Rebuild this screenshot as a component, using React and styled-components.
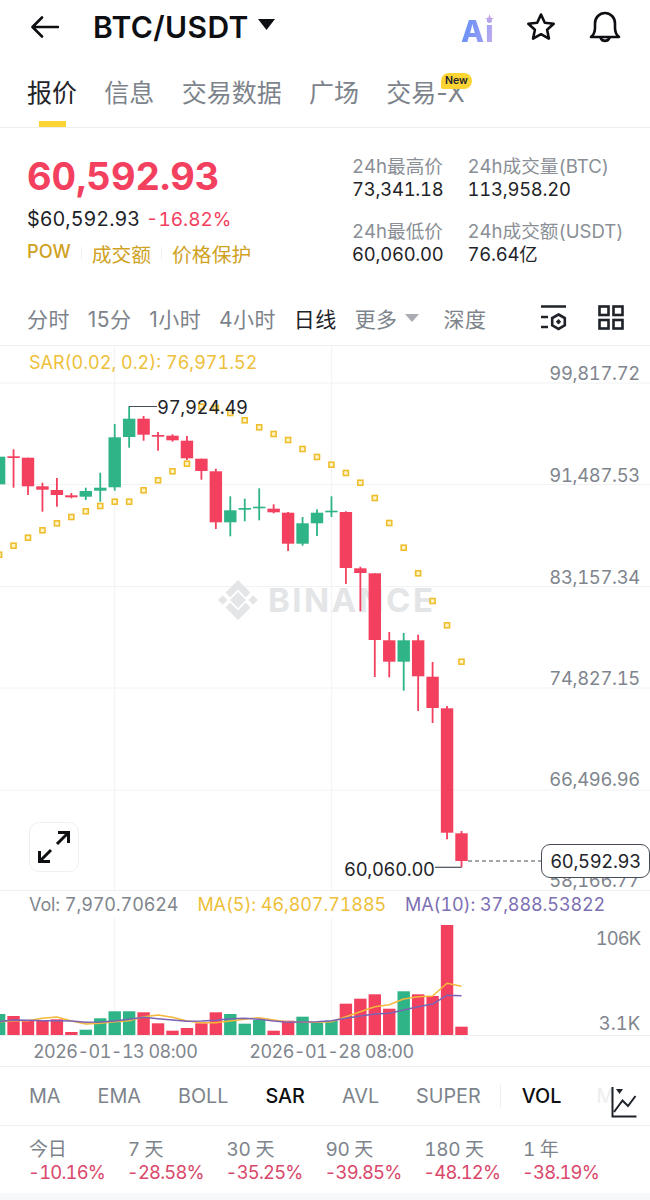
import React from "react";
import styled, { createGlobalStyle } from "styled-components";

const RED = "#f4405f";
const GREEN = "#2eb486";
const GRID = "#f1f2f4";

// chart data is in page pixels, the svg viewBoxes below use page coordinates
const candleX = (i) => 114.7 + 14.45 * i;

// [index, up, bodyTop, bodyBottom, wickTop, wickBottom]
const candles = [
  [-8, 1, 456.7, 484.3, 445, 484.3],
  [-7, 0, 456.3, 458, 449.3, 487.7],
  [-6, 0, 457.7, 486.3, 457.7, 495],
  [-5, 0, 486.3, 489.7, 482.7, 511.7],
  [-4, 0, 490, 495, 478, 506.7],
  [-3, 0, 495.3, 497.3, 493, 498.3],
  [-2, 1, 491, 496.7, 487.7, 500],
  [-1, 1, 487.7, 490.7, 472.7, 501.7],
  [0, 1, 437.3, 487.3, 424, 490.7],
  [1, 1, 418.7, 437, 406.7, 447.7],
  [2, 0, 418.7, 434.7, 416, 440.7],
  [3, 0, 435, 436.7, 432, 450.7],
  [4, 0, 435.7, 440.3, 434.3, 441.7],
  [5, 0, 440.7, 458.3, 436, 460],
  [6, 0, 458.7, 471, 458.7, 479.7],
  [7, 0, 471.3, 522.3, 468.7, 529],
  [8, 1, 510.3, 522.3, 496.3, 536.3],
  [9, 1, 508, 509.7, 498.7, 521.3],
  [10, 1, 506.7, 508.3, 488.3, 520.3],
  [11, 0, 508.7, 512.3, 504.3, 513.3],
  [12, 0, 512.7, 543.7, 512, 551],
  [13, 1, 523.3, 543.7, 517, 545.7],
  [14, 1, 512.7, 523.3, 509.3, 536],
  [15, 1, 510.7, 512.3, 496.3, 517],
  [16, 0, 512, 568, 511.3, 584],
  [17, 0, 568.3, 573, 566.7, 611.3],
  [18, 0, 573.3, 640, 573.3, 677],
  [19, 0, 640.3, 661.7, 632, 677.3],
  [20, 1, 640.3, 661.7, 633, 690.7],
  [21, 0, 640.3, 676.3, 634.7, 711],
  [22, 0, 676.7, 708, 662, 723],
  [23, 0, 708.3, 832.7, 706, 839.3],
  [24, 0, 833.3, 861, 831, 867.3],
];

const sarDots = [
  554.7, 545.7, 537.7, 530.3, 523.3, 517, 511.3, 506, 501.7, 501.7, 490.3, 480.3, 471.3, 463.7,
  406.7, 408, 413, 420.3, 427.3, 434, 440, 449, 457, 464.7, 473, 482.7, 498, 523, 547.7, 573.3,
  601, 625.3, 661.7,
];

const volumes = [
  1014, 1016, 1020, 1020, 1019.3, 1032, 1029.7, 1018.3, 1011.3, 1011.3, 1012.3, 1023.3, 1030.7,
  1028, 1023.3, 1012.3, 1014, 1023.7, 1020, 1030.7, 1020.7, 1016.7, 1022.7, 1020.7, 1003.7, 998.7,
  994.3, 1008.7, 991.3, 994.3, 996, 925, 1026.7,
];

const ma5 = [
  1021.7, 1020.7, 1020.7, 1018.3, 1017, 1021, 1024, 1023.3, 1021.7, 1020.7, 1016.7, 1015, 1017.3,
  1021, 1022.7, 1022.7, 1021, 1019.3, 1017.7, 1020, 1022, 1022.3, 1022.3, 1021.7, 1016.7, 1011.7,
  1006.7, 1004.7, 999, 996.7, 996, 983.3, 986.3,
];

const ma10 = [
  1021.7, 1020, 1020.3, 1020.7, 1020.7, 1021, 1022.3, 1022, 1021, 1019.3, 1017.3, 1018.7, 1020,
  1021.3, 1021, 1020.3, 1018.7, 1018.3, 1019.3, 1021, 1022.3, 1022, 1021.7, 1020.7, 1018.3, 1016,
  1014, 1013.3, 1010, 1006.7, 1004, 995.3, 995.7,
];

const priceAxis = [
  ["99,817.72", 373],
  ["91,487.53", 475],
  ["83,157.34", 577],
  ["74,827.15", 678],
  ["66,496.96", 779],
  ["58,166.77", 880],
];

const toPoints = (list) => list.map((y, n) => `${candleX(n - 8).toFixed(1)},${y}`).join(" ");

const GlobalStyle = createGlobalStyle`
  html, body {
    margin: 0;
    background: #fff;
  }
  body {
    font-family: Inter, "Noto Sans CJK SC", sans-serif;
    font-variant-numeric: tabular-nums;
    color: #1e2329;
  }
`;

const Page = styled.div`
  width: 650px;
  height: 1200px;
  overflow: hidden;
`;

const Header = styled.div`
  height: 54px;
  display: flex;
  align-items: center;
  padding: 0 29px 0 31px;
`;

const Title = styled.div`
  font-size: 30px;
  font-weight: 600;
  margin-left: 34px;
  color: #0d0f12;
  letter-spacing: 0.4px;
`;

const TitleCaret = styled.svg`
  margin: 0 0 5px 9px;
`;

const Spacer = styled.div`
  flex: 1;
`;

const AiBadge = styled.div`
  position: relative;
  width: 34px;
  margin: 8px 31px 0 0;
`;

const AiText = styled.span`
  font-size: 30px;
  font-weight: 800;
  line-height: 28px;
  letter-spacing: 1px;
  background: linear-gradient(100deg, #5f8df5, #8f9cf5 60%, #d3b4ea);
  -webkit-background-clip: text;
  background-clip: text;
  color: transparent;
`;

const Sparkle = styled.svg`
  position: absolute;
  right: 1px;
  top: -3px;
`;

const IconGap = styled.div`
  width: 33px;
`;

const Tabs = styled.div`
  height: 73px;
  display: flex;
  gap: 27.3px;
  padding-left: 27px;
  border-bottom: 1px solid #eeeff1;
  font-variant-numeric: normal;
`;

const Tab = styled.div`
  position: relative;
  font-size: 25px;
  line-height: 78px;
  color: ${(p) => (p.$active ? "#1e2329" : "#7d838b")};

  &::after {
    content: "";
    display: ${(p) => (p.$active ? "block" : "none")};
    position: absolute;
    left: 12px;
    bottom: 0;
    width: 27px;
    height: 6px;
    background: #fcd535;
  }
`;

const NewBadge = styled.span`
  position: absolute;
  right: -7px;
  top: 19px;
  height: 16px;
  line-height: 16px;
  padding: 0 4px;
  border-radius: 8px 8px 8px 2px;
  background: #fcd535;
  color: #1e2329;
  font-size: 10.5px;
  font-weight: 600;
`;

const Summary = styled.div`
  height: 167px;
  display: flex;
  box-sizing: border-box;
  padding-top: 27px;
`;

const PriceCol = styled.div`
  width: 352px;
  padding-left: 27px;
  box-sizing: border-box;
`;

const BigPrice = styled.div`
  font-size: 38px;
  line-height: 42px;
  font-weight: 700;
  color: ${RED};
`;

const SubRow = styled.div`
  display: flex;
  align-items: center;
  gap: 6px;
  margin-top: 10px;
  height: 24px;
  font-size: 19.8px;
`;

const Change = styled.span`
  color: ${RED};
  font-size: 19px;
`;

const TagRow = styled.div`
  display: flex;
  align-items: center;
  gap: 10px;
  margin-top: 10px;
  height: 24px;
  color: #cfa21f;
  font-size: 19.8px;
`;

const Pow = styled.span`
  font-size: 18.2px;
  font-weight: 500;
  margin-top: -4px;
`;

const TagDivider = styled.span`
  width: 1px;
  height: 12px;
  background: #eeeff1;
`;

const Stats = styled.div`
  display: grid;
  grid-template-columns: 115.5px 1fr;
  grid-template-rows: 22px 22px 18px 22px 22px;
  row-gap: 1px;
`;

const StatLabel = styled.div`
  font-size: 18.6px;
  line-height: 22px;
  color: #8a8f96;
  white-space: nowrap;
`;

const StatValue = styled.div`
  font-size: 18.4px;
  line-height: 22px;
  letter-spacing: -0.2px;
  color: #1e2329;
`;

const StatGap = styled.div`
  grid-column: 1 / 3;
`;

const Intervals = styled.div`
  height: 51px;
  display: flex;
  align-items: center;
  gap: 18px;
  padding: 0 27px 5px;
  box-sizing: border-box;
  border-bottom: 1px solid #f0f1f3;
  font-size: 21px;
  letter-spacing: 0.4px;
  font-variant-numeric: normal;
`;

const Interval = styled.span`
  color: ${(p) => (p.$active ? "#1e2329" : "#7d838b")};
  white-space: nowrap;
`;

const MoreCaret = styled.span`
  width: 0;
  height: 0;
  border-left: 7px solid transparent;
  border-right: 7px solid transparent;
  border-top: 8px solid #a9adb3;
  margin: 0 6px 0 -10px;
`;

const ToolIcon = styled.svg`
  margin-left: ${(p) => p.$gap}px;
  flex: none;
`;

const ChartPanel = styled.div`
  position: relative;
  height: 544px;
`;

const Plot = styled.svg`
  display: block;
`;

const SarLegend = styled.div`
  position: absolute;
  left: 29px;
  top: 6px;
  font-size: 18px;
  line-height: 22px;
  color: #eebf3a;
`;

const ExpandButton = styled.div`
  position: absolute;
  left: 29px;
  top: 476px;
  width: 50px;
  height: 50px;
  box-sizing: border-box;
  display: flex;
  align-items: center;
  justify-content: center;
  background: #fff;
  border: 1px solid #eff0f2;
  border-radius: 10px;
`;

const LastPriceTag = styled.div`
  position: absolute;
  left: 541px;
  top: 498px;
  width: 109px;
  height: 34px;
  box-sizing: border-box;
  border: 1px solid #474d57;
  border-radius: 9px;
  background: #fff;
  font-size: 18.4px;
  letter-spacing: -0.3px;
  line-height: 32px;
  text-align: center;
`;

const AxisLabel = styled.text`
  font-size: 18.4px;
  letter-spacing: ${(p) => p.$spacing ?? -0.3}px;
  fill: #80858d;
  text-anchor: end;
  dominant-baseline: central;
`;

const MarkLabel = styled.text`
  font-size: 18.4px;
  letter-spacing: -0.3px;
  fill: #1e2329;
  dominant-baseline: central;
`;

const Watermark = styled.text`
  font-size: 33px;
  font-weight: 700;
  fill: #e4e5e7;
  dominant-baseline: central;
`;

const VolLegend = styled.div`
  height: 28px;
  display: flex;
  align-items: center;
  gap: 19px;
  padding-left: 29px;
  font-size: 18px;
  letter-spacing: -0.1px;
  border-top: 1px solid #f0f1f3;
  box-sizing: border-box;
`;

const LegendItem = styled.span`
  color: ${(p) => p.$color};
  white-space: nowrap;
`;

const Dates = styled.div`
  height: 30px;
  display: flex;
  align-items: center;
  gap: 52px;
  padding-left: 33px;
  font-size: 18px;
  letter-spacing: -0.55px;
  color: #80858d;
  border-bottom: 1px solid #eeeff1;
`;

const Indicators = styled.div`
  position: relative;
  height: 58px;
  display: flex;
  align-items: center;
  gap: 37px;
  padding-left: 29px;
  font-size: 19.8px;
  border-bottom: 1px solid #f0f1f3;
`;

const Indicator = styled.span`
  color: ${(p) => (p.$active ? "#0d0f12" : "#7d838b")};
  font-weight: ${(p) => (p.$active ? 500 : 400)};
`;

const FadedIndicator = styled.span`
  color: #eceded;
  margin-left: -2px;
`;

const IndicatorDivider = styled.span`
  width: 1px;
  height: 24px;
  background: #eeeff1;
  margin: 0 -16px 0 -18px;
`;

const ChartToggle = styled.svg`
  position: absolute;
  right: 13px;
  top: 19px;
`;

const Periods = styled.div`
  height: 67px;
  box-sizing: border-box;
  display: grid;
  grid-template-columns: repeat(6, 98.8px);
  padding: 13px 0 0 29px;
`;

const Period = styled.div`
  display: flex;
  flex-direction: column;
  font-size: 19px;
  letter-spacing: -0.3px;
  line-height: 22px;
  color: #7d838b;
  white-space: nowrap;
`;

const PeriodChange = styled.span`
  color: #d9476a;
  font-size: 18.4px;
  letter-spacing: -0.8px;
  margin-left: -1px;
`;

const BottomBand = styled.div`
  height: 7px;
  background: #f7f8f9;
`;

const BackArrow = () => (
  <svg width="28" height="24" viewBox="0 0 28 24" fill="none" stroke="#0d0f12" strokeWidth="2.6" strokeLinecap="round" strokeLinejoin="round">
    <path d="M27 12H2M11 2.5L1.5 12l9.5 9.5" />
  </svg>
);

const StarIcon = () => (
  <svg width="30" height="30" viewBox="0 0 30 30" fill="none" stroke="#0d0f12" strokeWidth="2.6" strokeLinejoin="round">
    <path d="M15 2.5l3.8 8.2 8.9 1.1-6.6 6 1.8 8.8-7.9-4.4-7.9 4.4 1.8-8.8-6.6-6 8.9-1.1z" />
  </svg>
);

const BellIcon = () => (
  <svg width="32" height="33" viewBox="0 0 32 33" fill="none" stroke="#0d0f12" strokeWidth="2.6" strokeLinecap="round" strokeLinejoin="round">
    <path d="M2 26c3-2.5 4-5.5 4-9v-4.5C6 6.5 10.5 2 16 2s10 4.5 10 10.5V17c0 3.5 1 6.5 4 9z" />
    <path d="M11.5 26.5a4.7 4.7 0 0 0 9 0" />
  </svg>
);

const DrawToolIcon = () => (
  <ToolIcon $gap={36} width="28" height="26" viewBox="0 0 28 26" fill="none" stroke="#1e2329" strokeWidth="2.6">
    <path d="M1 1.5h25M1 12h7M1 22h7" />
    <path d="M18.5 9.5l6.3 3.6v7.2l-6.3 3.6-6.3-3.6v-7.2z" />
    <path d="M18.5 14l2.7 2.7-2.7 2.7-2.7-2.7z" fill="#1e2329" stroke="none" />
  </ToolIcon>
);

const GridIcon = () => (
  <ToolIcon $gap={12} width="26" height="25" viewBox="0 0 26 25" fill="none" stroke="#1e2329" strokeWidth="2.6">
    <rect x="1.5" y="1.5" width="9" height="8.5" />
    <rect x="15.5" y="1.5" width="9" height="8.5" />
    <rect x="1.5" y="15" width="9" height="8.5" />
    <rect x="15.5" y="15" width="9" height="8.5" />
  </ToolIcon>
);

const ExpandIcon = () => (
  <svg width="36" height="36" viewBox="0 0 36 36" fill="none" stroke="#0d0f12" strokeWidth="3">
    <path d="M21 15L32 4M22 3.5h10.5V14" />
    <path d="M15 21L4 32M14 32.5H3.5V22" />
  </svg>
);

const BinanceMark = () => (
  <g fill="#e4e5e7">
    <path d="M238 592l8 8-8 8-8-8z" />
    <path d="M238 580l12.5 12.5-4.7 4.7-7.8-7.8-7.8 7.8-4.7-4.7z" />
    <path d="M238 620l12.5-12.5-4.7-4.7-7.8 7.8-7.8-7.8-4.7 4.7z" />
    <path d="M218 600l4.8-4.8 4.8 4.8-4.8 4.8zM248.4 600l4.8-4.8 4.8 4.8-4.8 4.8z" />
  </g>
);

const PriceChart = () => (
  <Plot width="650" height="544" viewBox="0 346 650 544">
    {[383, 484.5, 586.5, 688, 790].map((y) => (
      <line key={y} x1="0" x2="650" y1={y} y2={y} stroke={GRID} />
    ))}
    {[114.7, 331.7].map((x) => (
      <line key={x} x1={x} x2={x} y1="346" y2="890" stroke={GRID} />
    ))}
    <BinanceMark />
    <Watermark x="268" y="600" textLength="165">BINANCE</Watermark>
    {priceAxis.map(([label, y]) => (
      <AxisLabel key={label} x="640" y={y}>{label}</AxisLabel>
    ))}
    {sarDots.map((y, n) => (
      <rect key={n} x={candleX(n - 8) - 2.5} y={y - 2.5} width="5" height="5" fill="#fff3c8" stroke="#efbe2c" strokeWidth="1.6" />
    ))}
    {candles.map(([i, up, top, bottom, wickTop, wickBottom]) => {
      const color = up ? GREEN : RED;
      const x = candleX(i);
      return (
        <g key={i} fill={color}>
          <rect x={x - 0.9} y={wickTop} width="1.8" height={wickBottom - wickTop} />
          <rect x={x - 6.2} y={top} width="12.4" height={bottom - top} />
        </g>
      );
    })}
    <path d="M129.3 407V406.5H157" fill="none" stroke="#474d57" strokeWidth="1.2" />
    <MarkLabel x="157" y="407">97,924.49</MarkLabel>
    <path d="M461.5 867.3H435" fill="none" stroke="#474d57" strokeWidth="1.2" />
    <MarkLabel x="344" y="868.5">60,060.00</MarkLabel>
    <line x1="468" x2="542" y1="861" y2="861" stroke="#474d57" strokeWidth="1.2" strokeDasharray="4 3" />
  </Plot>
);

const VolumeChart = () => (
  <Plot width="650" height="118" viewBox="0 918 650 118">
    {[114.7, 331.7].map((x) => (
      <line key={x} x1={x} x2={x} y1="918" y2="1035" stroke={GRID} />
    ))}
    <line x1="0" x2="650" y1="1035.5" y2="1035.5" stroke="#eeeff1" />
    {volumes.map((y, n) => (
      <rect
        key={n}
        x={candleX(n - 8) - 6.2}
        y={y}
        width="12.4"
        height={1035 - y}
        fill={candles[n][1] ? GREEN : RED}
      />
    ))}
    <polyline points={toPoints(ma5)} fill="none" stroke="#f5b83a" strokeWidth="1.5" strokeLinejoin="round" />
    <polyline points={toPoints(ma10)} fill="none" stroke="#7a63b5" strokeWidth="1.5" strokeLinejoin="round" />
    <AxisLabel x="640" y="938" $spacing={-1}>106K</AxisLabel>
    <AxisLabel x="640" y="1023" $spacing={0}>3.1K</AxisLabel>
  </Plot>
);

const periods = [
  ["今日", "-10.16%"],
  ["7 天", "-28.58%"],
  ["30 天", "-35.25%"],
  ["90 天", "-39.85%"],
  ["180 天", "-48.12%"],
  ["1 年", "-38.19%"],
];

export default function App() {
  return (
    <Page>
      <GlobalStyle />
      <Header>
        <BackArrow />
        <Title>BTC/USDT</Title>
        <TitleCaret width="17" height="11" viewBox="0 0 17 11">
          <path d="M0 0h17l-8.5 11z" fill="#0d0f12" />
        </TitleCaret>
        <Spacer />
        <AiBadge>
          <AiText>Ai</AiText>
          <Sparkle width="9" height="9" viewBox="0 0 10 10">
            <path d="M5 0l1.2 3.8L10 5 6.2 6.2 5 10 3.8 6.2 0 5l3.8-1.2z" fill="#c3a3e6" />
          </Sparkle>
        </AiBadge>
        <StarIcon />
        <IconGap />
        <BellIcon />
      </Header>

      <Tabs>
        <Tab $active>报价</Tab>
        <Tab>信息</Tab>
        <Tab>交易数据</Tab>
        <Tab>广场</Tab>
        <Tab>
          交易-X
          <NewBadge>New</NewBadge>
        </Tab>
      </Tabs>

      <Summary>
        <PriceCol>
          <BigPrice>60,592.93</BigPrice>
          <SubRow>
            $60,592.93 <Change>-16.82%</Change>
          </SubRow>
          <TagRow>
            <Pow>POW</Pow>
            <TagDivider />
            <span>成交额</span>
            <TagDivider />
            <span>价格保护</span>
          </TagRow>
        </PriceCol>
        <Stats>
          <StatLabel>24h最高价</StatLabel>
          <StatLabel>24h成交量(BTC)</StatLabel>
          <StatValue>73,341.18</StatValue>
          <StatValue>113,958.20</StatValue>
          <StatGap />
          <StatLabel>24h最低价</StatLabel>
          <StatLabel>24h成交额(USDT)</StatLabel>
          <StatValue>60,060.00</StatValue>
          <StatValue>76.64亿</StatValue>
        </Stats>
      </Summary>

      <Intervals>
        <Interval>分时</Interval>
        <Interval>15分</Interval>
        <Interval>1小时</Interval>
        <Interval>4小时</Interval>
        <Interval $active>日线</Interval>
        <Interval>更多</Interval>
        <MoreCaret />
        <Interval>深度</Interval>
        <DrawToolIcon />
        <GridIcon />
      </Intervals>

      <ChartPanel>
        <PriceChart />
        <SarLegend>SAR(0.02, 0.2): 76,971.52</SarLegend>
        <ExpandButton>
          <ExpandIcon />
        </ExpandButton>
        <LastPriceTag>60,592.93</LastPriceTag>
      </ChartPanel>

      <VolLegend>
        <LegendItem $color="#80858d">Vol: 7,970.70624</LegendItem>
        <LegendItem $color="#eebf3a">MA(5): 46,807.71885</LegendItem>
        <LegendItem $color="#7d6fb3">MA(10): 37,888.53822</LegendItem>
      </VolLegend>
      <VolumeChart />
      <Dates>
        <span>2026-01-13 08:00</span>
        <span>2026-01-28 08:00</span>
      </Dates>

      <Indicators>
        <Indicator>MA</Indicator>
        <Indicator>EMA</Indicator>
        <Indicator>BOLL</Indicator>
        <Indicator $active>SAR</Indicator>
        <Indicator>AVL</Indicator>
        <Indicator>SUPER</Indicator>
        <IndicatorDivider />
        <Indicator $active>VOL</Indicator>
        <FadedIndicator>M</FadedIndicator>
        <ChartToggle width="26" height="34" viewBox="0 0 26 34" fill="none" stroke="#1e2329" strokeWidth="2">
          <path d="M1.5 1v29.5H25.5" />
          <path d="M3 26l8.5-11.5 5.5 5.5 7.5-10" />
          <path d="M5 3h7l-3.5 5z" fill="#1e2329" stroke="none" />
        </ChartToggle>
      </Indicators>

      <Periods>
        {periods.map(([label, change]) => (
          <Period key={label}>
            {label}
            <PeriodChange>{change}</PeriodChange>
          </Period>
        ))}
      </Periods>
      <BottomBand />
    </Page>
  );
}
